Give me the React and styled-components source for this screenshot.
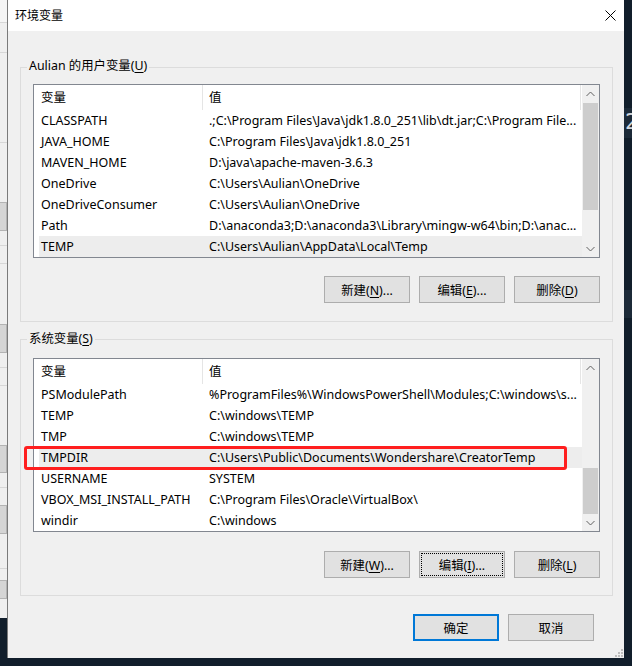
import React from 'react';
import styled, { createGlobalStyle } from 'styled-components';

const GlobalStyle = createGlobalStyle`
  html, body {
    margin: 0;
    padding: 0;
  }
  body {
    width: 632px;
    height: 666px;
    overflow: hidden;
    background: #111e2b;
    font-family: "Noto Sans", "Noto Sans CJK SC", sans-serif;
    font-size: 12px;
    color: #000;
  }
`;

const userVars = [
  ['CLASSPATH', '.;C:\\Program Files\\Java\\jdk1.8.0_251\\lib\\dt.jar;C:\\Program File...'],
  ['JAVA_HOME', 'C:\\Program Files\\Java\\jdk1.8.0_251'],
  ['MAVEN_HOME', 'D:\\java\\apache-maven-3.6.3'],
  ['OneDrive', 'C:\\Users\\Aulian\\OneDrive'],
  ['OneDriveConsumer', 'C:\\Users\\Aulian\\OneDrive'],
  ['Path', 'D:\\anaconda3;D:\\anaconda3\\Library\\mingw-w64\\bin;D:\\anac...'],
  ['TEMP', 'C:\\Users\\Aulian\\AppData\\Local\\Temp'],
];

const sysVars = [
  ['PSModulePath', '%ProgramFiles%\\WindowsPowerShell\\Modules;C:\\windows\\s...'],
  ['TEMP', 'C:\\windows\\TEMP'],
  ['TMP', 'C:\\windows\\TEMP'],
  ['TMPDIR', 'C:\\Users\\Public\\Documents\\Wondershare\\CreatorTemp'],
  ['USERNAME', 'SYSTEM'],
  ['VBOX_MSI_INSTALL_PATH', 'C:\\Program Files\\Oracle\\VirtualBox\\'],
  ['windir', 'C:\\windows'],
];

// strips of the window peeking out on the left
const bgStrips = [
  ['pad', 22, '#f5f5f5'], ['line'], ['pad', 29], ['line'], ['pad', 89], ['line'],
  ['pad', 59], ['block', 29], ['pad', 14], ['line'], ['pad', 17], ['line'],
  ['pad', 60], ['block', 29], ['pad', 14], ['line'], ['pad', 17], ['line'],
  ['pad', 59], ['block', 28], ['pad', 14], ['line'], ['pad', 17], ['block', 29],
  ['pad', 34], ['line'], ['pad', 11], ['block', 19], ['pad', 19],
];

export default function App() {
  return (
    <>
      <GlobalStyle />
      <Desktop>
        <BgWindow>
          {bgStrips.map(([kind, h, c], i) =>
            kind === 'line' ? <BgLine key={i} /> :
            kind === 'block' ? <BgBlock key={i} $h={h} /> :
            <BgPad key={i} $h={h} $c={c} />
          )}
        </BgWindow>

        <EditorStrip>
          <EditorGap $h={108} />
          <EditorBand $h={30}>2</EditorBand>
          <EditorGap $h={152} />
          <EditorBand $h={28} />
        </EditorStrip>

        <Dialog>
          <TitleBar>
            <Title>环境变量</Title>
            <CloseBtn>
              <svg width="11" height="11" viewBox="0 0 11 11">
                <path d="M0.5 0.5 L10.5 10.5 M10.5 0.5 L0.5 10.5" stroke="#000" strokeWidth="1" fill="none" />
              </svg>
            </CloseBtn>
          </TitleBar>

          <Body>
            <Group $top={36} $padTop={16} $padBottom={18}>
              <GroupLabel $top={-10}>Aulian 的用户变量(<u>U</u>)</GroupLabel>
              <VarList rows={userVars} selected={6} thumbGap={1} thumbSize={107} />
              <ButtonRow>
                <Button>新建(<u>N</u>)...</Button>
                <Button>编辑(<u>E</u>)...</Button>
                <Button>删除(<u>D</u>)</Button>
              </ButtonRow>
            </Group>

            <Group $top={17} $padTop={18} $padBottom={17}>
              <GroupLabel $top={-9}>系统变量(<u>S</u>)</GroupLabel>
              <VarList rows={sysVars} selected={3} marked={3} thumbGap={92} thumbSize={46} />
              <ButtonRow $top={19}>
                <Button>新建(<u>W</u>)...</Button>
                <Button $focus>编辑(<u>I</u>)...</Button>
                <Button>删除(<u>L</u>)</Button>
              </ButtonRow>
            </Group>

            <Footer>
              <Button $default>确定</Button>
              <Button>取消</Button>
            </Footer>
          </Body>

          <Grip width="10" height="10" viewBox="0 0 10 10">
            {[[8, 0], [5, 3], [8, 3], [2, 6], [5, 6], [8, 6]].map(([x, y]) => (
              <rect key={`${x}-${y}`} x={x} y={y + 2} width="2" height="2" fill="#bdbdbd" />
            ))}
          </Grip>
        </Dialog>
      </Desktop>
    </>
  );
}

function VarList({ rows, selected, marked, thumbGap, thumbSize }) {
  return (
    <ListBox>
      <Table>
        <Header>
          <HeadName>变量</HeadName>
          <HeadValue>值</HeadValue>
        </Header>
        {rows.map(([name, value], i) => (
          <Row key={name + i} $selected={i === selected}>
            <NameCell>{name}</NameCell>
            <ValueCell>{value}</ValueCell>
            {i === marked && <Mark />}
          </Row>
        ))}
      </Table>
      <ScrollBar>
        <ArrowBtn>
          <svg width="9" height="6" viewBox="0 0 9 6">
            <polyline points="0.5,5 4.5,1 8.5,5" stroke="#606060" strokeWidth="1" fill="none" />
          </svg>
        </ArrowBtn>
        <Track>
          <Thumb $gap={thumbGap} $size={thumbSize} />
        </Track>
        <ArrowBtn>
          <svg width="9" height="6" viewBox="0 0 9 6">
            <polyline points="0.5,1 4.5,5 8.5,1" stroke="#606060" strokeWidth="1" fill="none" />
          </svg>
        </ArrowBtn>
      </ScrollBar>
    </ListBox>
  );
}

const Desktop = styled.div`
  position: relative;
  width: 632px;
  height: 666px;
  overflow: hidden;
`;

const BgWindow = styled.div`
  position: absolute;
  left: 0;
  top: 0;
  width: 7px;
  height: 618px;
  background: #efefef;
  display: flex;
  flex-direction: column;
`;
const BgPad = styled.div`
  height: ${p => p.$h}px;
  background: ${p => p.$c || '#efefef'};
`;
const BgLine = styled.div`
  height: 1px;
  background: #d7d7d7;
`;
const BgBlock = styled.div`
  height: ${p => p.$h}px;
  box-sizing: border-box;
  background: #d5d5d5;
  border: 1px solid #b3b3b3;
  border-left: none;
`;

const EditorStrip = styled.div`
  position: absolute;
  left: 624px;
  top: 0;
  width: 8px;
  height: 666px;
  display: flex;
  flex-direction: column;
`;
const EditorGap = styled.div`
  height: ${p => p.$h}px;
`;
const EditorBand = styled.div`
  height: ${p => p.$h}px;
  background: #1c2a38;
  color: #cfd6dd;
  font-family: "DejaVu Sans Mono", monospace;
  font-size: 21px;
  line-height: 28px;
  padding-left: 1px;
  white-space: nowrap;
  overflow: hidden;
`;

const Dialog = styled.div`
  position: absolute;
  left: 7px;
  top: 0;
  width: 617px;
  height: 658px;
  box-sizing: border-box;
  border-left: 1px solid #7a7a7a;
  background: #f0f0f0;
  display: flex;
  flex-direction: column;
`;

const TitleBar = styled.div`
  height: 31px;
  flex-shrink: 0;
  background: #fff;
  display: flex;
  align-items: center;
  padding-left: 7px;
`;
const Title = styled.div`
  font-size: 12px;
  line-height: 16px;
`;
const CloseBtn = styled.div`
  margin-left: auto;
  width: 28px;
  height: 31px;
  display: flex;
  align-items: center;
  justify-content: center;
`;

const Body = styled.div`
  padding-left: 12px;
  display: flex;
  flex-direction: column;
`;

const Group = styled.div`
  position: relative;
  width: 593px;
  box-sizing: border-box;
  margin-top: ${p => p.$top}px;
  border: 1px solid #dcdcdc;
  padding: ${p => p.$padTop}px 12px ${p => p.$padBottom}px;
`;
const GroupLabel = styled.div`
  position: absolute;
  top: ${p => p.$top}px;
  left: 6px;
  padding: 0 2px;
  line-height: 16px;
  font-size: 12.4px;
  background: #f0f0f0;
  u {
    text-underline-offset: 2px;
  }
`;

const ListBox = styled.div`
  width: 567px;
  height: 174px;
  box-sizing: border-box;
  border: 1px solid #828790;
  background: #fff;
  display: flex;
  font-size: 12.5px;
`;
const Table = styled.div`
  width: 548px;
  display: flex;
  flex-direction: column;
`;
const Header = styled.div`
  display: flex;
  height: 25px;
  flex-shrink: 0;
`;
const HeadName = styled.div`
  width: 169px;
  box-sizing: border-box;
  padding-left: 7px;
  border-right: 1px solid #e5e5e5;
  line-height: 25px;
`;
const HeadValue = styled.div`
  width: 378px;
  box-sizing: border-box;
  padding-left: 6px;
  border-right: 1px solid #e5e5e5;
  line-height: 25px;
`;
const Row = styled.div`
  position: relative;
  display: flex;
  margin-left: 5px;
  width: 543px;
  height: 21px;
  line-height: 21px;
  flex-shrink: 0;
  background: ${p => (p.$selected ? '#ededed' : 'transparent')};
`;
const NameCell = styled.div`
  width: 164px;
  box-sizing: border-box;
  padding-left: 2px;
  white-space: nowrap;
  overflow: hidden;
`;
const ValueCell = styled.div`
  flex: 1;
  padding-left: 6px;
  white-space: nowrap;
  overflow: hidden;
`;
const Mark = styled.div`
  position: absolute;
  left: -15px;
  top: -1px;
  width: 543px;
  height: 24px;
  box-sizing: border-box;
  border: 3px solid #ff1e1e;
  border-radius: 3px;
  pointer-events: none;
`;

const ScrollBar = styled.div`
  width: 17px;
  background: #f0f0f0;
  display: flex;
  flex-direction: column;
`;
const ArrowBtn = styled.div`
  height: 17px;
  flex-shrink: 0;
  display: flex;
  align-items: center;
  justify-content: center;
`;
const Track = styled.div`
  flex: 1;
  display: flex;
  flex-direction: column;
`;
const Thumb = styled.div`
  margin: ${p => p.$gap}px 1px 0;
  height: ${p => p.$size}px;
  background: #cdcdcd;
`;

const ButtonRow = styled.div`
  display: flex;
  justify-content: flex-end;
  gap: 9px;
  margin-top: ${p => p.$top || 18}px;
`;
const Footer = styled.div`
  display: flex;
  justify-content: flex-end;
  gap: 9px;
  margin-top: 18px;
  padding-right: 30px;
`;
const Button = styled.button`
  width: 86px;
  height: 27px;
  box-sizing: border-box;
  padding: 0;
  margin: 0;
  background: #e1e1e1;
  border: ${p => (p.$default ? '2px solid #0078d7' : '1px solid #adadad')};
  font-family: "Noto Sans", "Noto Sans CJK SC", sans-serif;
  font-size: 12.4px;
  color: #000;
  outline: ${p => (p.$focus ? '1px dotted #000' : 'none')};
  outline-offset: -3px;
  u {
    text-underline-offset: 2px;
  }
`;

const Grip = styled.svg`
  position: absolute;
  right: 1px;
  bottom: 1px;
`;
